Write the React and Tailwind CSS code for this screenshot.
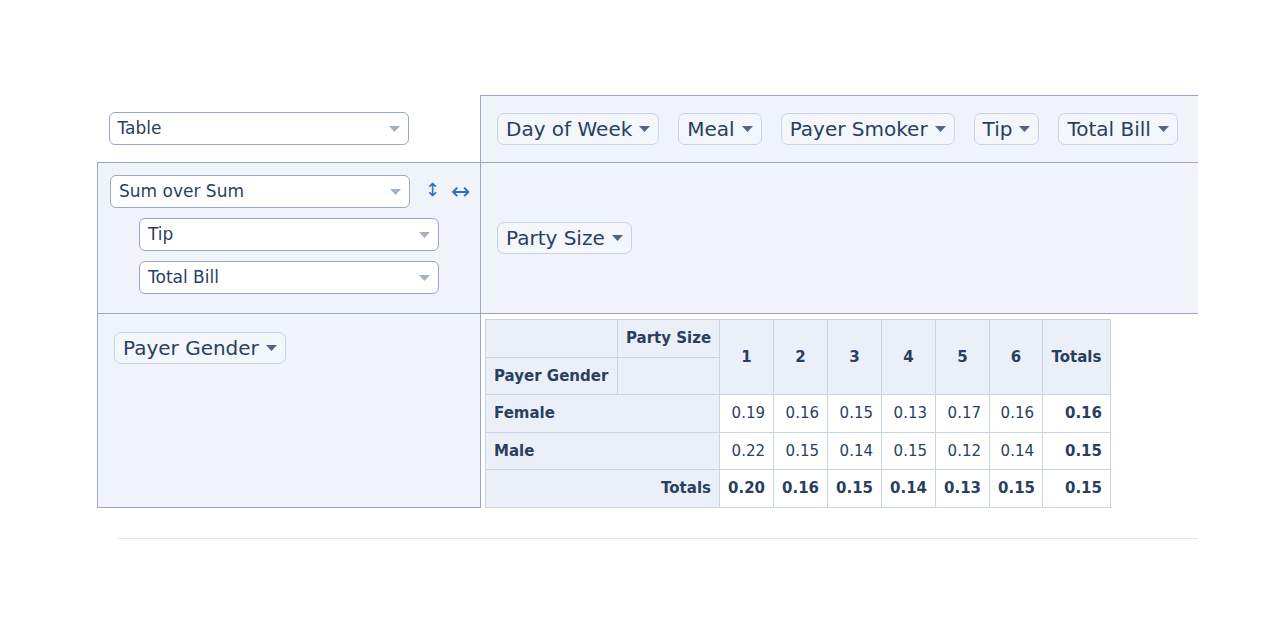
import React from 'react'

const C = {
  text: 'text-[#2a3f5f]',
}

const UNUSED = ['Day of Week', 'Meal', 'Payer Smoker', 'Tip', 'Total Bill']

const COLS = [1, 2, 3, 4, 5, 6]
const ROWS = [
  { label: 'Female', vals: ['0.19', '0.16', '0.15', '0.13', '0.17', '0.16'], total: '0.16' },
  { label: 'Male', vals: ['0.22', '0.15', '0.14', '0.15', '0.12', '0.14'], total: '0.15' },
]
const COL_TOTALS = ['0.20', '0.16', '0.15', '0.14', '0.13', '0.15']

function DropTriangle({ color = '#a2b1c6' }) {
  return (
    <svg width="11" height="6" viewBox="0 0 11 6" className="shrink-0">
      <polygon points="0,0 11,0 5.5,6" fill={color} />
    </svg>
  )
}

function Dropdown({ label, className = '' }) {
  return (
    <div
      className={`w-[300px] h-[33px] flex items-center justify-between pl-[8px] pr-[8px] bg-white border border-[#98a8be] rounded-[6px] text-[17px] ${className}`}
    >
      <span>{label}</span>
      <DropTriangle />
    </div>
  )
}

function Pill({ label }) {
  return (
    <span className="inline-flex items-center gap-[7px] h-[32px] pl-[8px] pr-[8px] bg-[#f3f6fa] border border-[#c8d4e3] rounded-[7px] text-[20px] whitespace-nowrap">
      {label}
      <DropTriangle color="#506784" />
    </span>
  )
}

function PivotTable() {
  const th = 'bg-[#ebf0f8] border border-[#c8d4e3] px-[8px] py-[7px] font-bold whitespace-nowrap'
  const td = 'bg-white border border-[#c8d4e3] px-[8px] py-[7px] text-right'
  return (
    <table className="border-collapse table-fixed w-[625px] text-[15px] leading-[22.6px] text-left">
      <colgroup>
        <col className="w-[132px]" />
        <col className="w-[102px]" />
        {COLS.map(c => (
          <col key={c} className={c === 6 ? 'w-[53px]' : 'w-[54px]'} />
        ))}
        <col className="w-[68px]" />
      </colgroup>
      <thead>
        <tr>
          <th className={th}></th>
          <th className={`${th} text-left`}>Party Size</th>
          {COLS.map(c => (
            <th key={c} rowSpan={2} className={`${th} text-center`}>{c}</th>
          ))}
          <th rowSpan={2} className={`${th} text-center`}>Totals</th>
        </tr>
        <tr>
          <th className={`${th} text-left`}>Payer Gender</th>
          <th className={th}></th>
        </tr>
      </thead>
      <tbody>
        {ROWS.map(r => (
          <tr key={r.label}>
            <th colSpan={2} className={`${th} text-left`}>{r.label}</th>
            {r.vals.map((v, i) => (
              <td key={i} className={td}>{v}</td>
            ))}
            <td className={`${td} font-bold`}>{r.total}</td>
          </tr>
        ))}
        <tr>
          <th colSpan={2} className={`${th} text-right`}>Totals</th>
          {COL_TOTALS.map((v, i) => (
            <td key={i} className={`${td} font-bold`}>{v}</td>
          ))}
          <td className={`${td} font-bold`}>0.15</td>
        </tr>
      </tbody>
    </table>
  )
}

export default function App() {
  const cell = 'border border-[#98a8be] bg-[#f0f4fa]'
  return (
    <div className={`min-h-[640px] bg-white pt-[95px] font-['DejaVu_Sans',Verdana,sans-serif] ${C.text}`}>
      <div className="ml-[96px] w-[1102px] overflow-hidden pl-[1px]">
        <table className="border-collapse table-fixed w-[1190px]">
          <colgroup>
            <col className="w-[383px]" />
            <col className="w-[807px]" />
          </colgroup>
          <tbody>
            {/* renderer + unused attrs */}
            <tr>
              <td className="h-[67px] align-middle pl-[11px]">
                <Dropdown label="Table" />
              </td>
              <td className={`${cell} h-[67px] align-middle pl-[16px]`}>
                <div className="flex items-center gap-[19px]">
                  {UNUSED.map(u => (
                    <Pill key={u} label={u} />
                  ))}
                </div>
              </td>
            </tr>

            {/* aggregator + cols */}
            <tr>
              <td className={`${cell} h-[151px] align-top pt-[12px] pl-[12px]`}>
                <div className="flex flex-col gap-[10px]">
                  <div className="flex items-center">
                    <Dropdown label="Sum over Sum" className="h-[32px]" />
                    <span className="ml-[15px] text-[18px] text-[#2f6db5] leading-none -mt-[3px]">↕</span>
                    <span className="ml-[11px] text-[23px] text-[#2f6db5] leading-none">↔</span>
                  </div>
                  <Dropdown label="Tip" className="ml-[29px] h-[32px]" />
                  <Dropdown label="Total Bill" className="ml-[29px] h-[32px]" />
                </div>
              </td>
              <td className={`${cell} h-[151px] align-middle pl-[16px]`}>
                <Pill label="Party Size" />
              </td>
            </tr>

            {/* rows + output */}
            <tr>
              <td className={`${cell} align-top pt-[18px] pl-[16px]`}>
                <Pill label="Payer Gender" />
              </td>
              <td className="align-top pt-[5px] pl-[4px] pb-0">
                <PivotTable />
              </td>
            </tr>
          </tbody>
        </table>
      </div>
      <div className="ml-[118px] w-[1080px] mt-[30px] border-t border-[#e5e7eb]" />
    </div>
  )
}
